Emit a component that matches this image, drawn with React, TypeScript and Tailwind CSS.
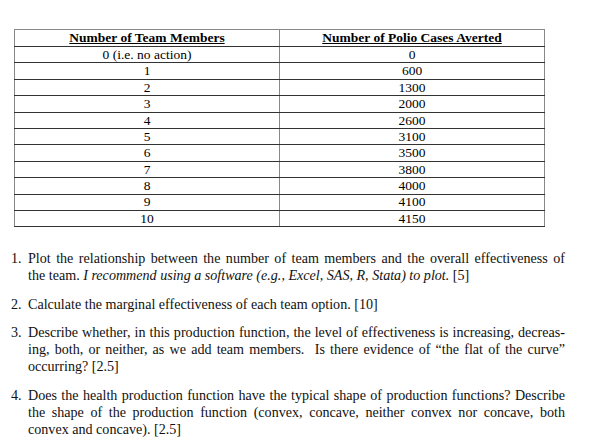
import React from 'react';

const rows = [
  ['0 (i.e. no action)', '0'],
  ['1', '600'],
  ['2', '1300'],
  ['3', '2000'],
  ['4', '2600'],
  ['5', '3100'],
  ['6', '3500'],
  ['7', '3800'],
  ['8', '4000'],
  ['9', '4100'],
  ['10', '4150'],
];

// a justified line that keeps the break where the source has it
const Line = ({ children, last }: { children: React.ReactNode; last?: boolean }) => (
  <div className={last ? 'whitespace-nowrap' : 'whitespace-nowrap text-justify [text-align-last:justify]'}>{children}</div>
);

const Question = ({ n, children }: { n: number; children: React.ReactNode }) => (
  <div className="flex">
    <div className="w-[17px] shrink-0">{n}.</div>
    <div className="w-[537px]">{children}</div>
  </div>
);

export default function App() {
  return (
    <div className="w-[595px] h-[442px] bg-white overflow-hidden">
      <div className="pt-[29px] pl-[14px]">
        <table className="border-collapse w-[531px] text-black text-[13.5px] leading-none [font-family:'Liberation_Serif',serif]">
          <thead>
            <tr className="h-[17px]">
              <th className="w-[265px] border border-[#888] border-b-[#333] font-bold underline p-0">Number of Team Members</th>
              <th className="border border-[#888] border-b-[#333] font-bold underline p-0">Number of Polio Cases Averted</th>
            </tr>
          </thead>
          <tbody>
            {rows.map((r, i) => (
              <tr key={i} className="h-[16.4px]">
                <td className="border border-[#888] border-y-[#333] text-center p-0">{r[0]}</td>
                <td className="border border-[#888] border-y-[#333] text-center p-0">{r[1]}</td>
              </tr>
            ))}
          </tbody>
        </table>
      </div>

      <div className="mt-[23px] pl-[11px] text-[#111] text-[14.1px] leading-[17px] [font-family:'Liberation_Serif',serif] flex flex-col gap-[11.5px]">
        <Question n={1}>
          <Line>Plot the relationship between the number of team members and the overall effectiveness of</Line>
          <Line last>
            the team. <i>I recommend using a software (e.g., Excel, SAS, R, Stata) to plot.</i> [5]
          </Line>
        </Question>
        <Question n={2}>
          <Line last>Calculate the marginal effectiveness of each team option. [10]</Line>
        </Question>
        <Question n={3}>
          <Line>Describe whether, in this production function, the level of effectiveness is increasing, decreas-</Line>
          <Line>ing, both, or neither, as we add team members.&nbsp; Is there evidence of “the flat of the curve”</Line>
          <Line last>occurring? [2.5]</Line>
        </Question>
        <Question n={4}>
          <Line>Does the health production function have the typical shape of production functions? Describe</Line>
          <Line>the shape of the production function (convex, concave, neither convex nor concave, both</Line>
          <Line last>convex and concave). [2.5]</Line>
        </Question>
      </div>
    </div>
  );
}
